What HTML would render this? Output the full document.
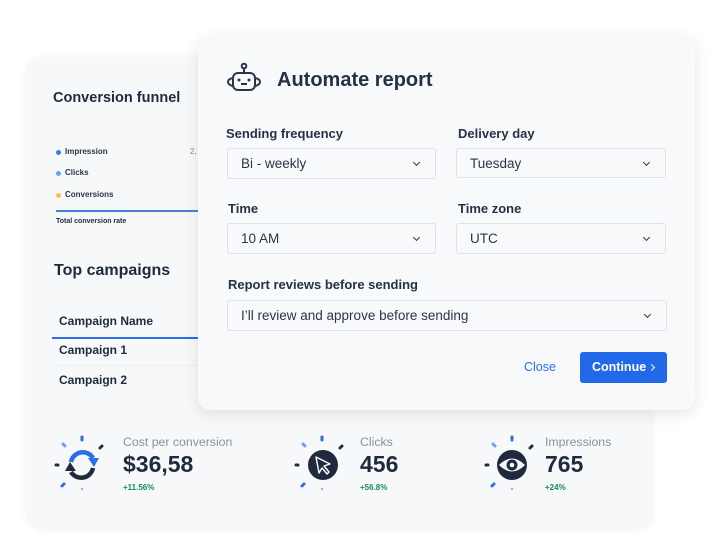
<!DOCTYPE html>
<html><head><meta charset="utf-8"><style>
*{margin:0;padding:0;box-sizing:border-box}
body{width:728px;height:560px;background:#fff;font-family:"Liberation Sans",sans-serif;color:#1f2a3c;position:relative;overflow:hidden}
.a{position:absolute;white-space:nowrap}
.card{position:absolute;left:25px;top:57px;width:629px;height:474px;background:#f7f8fa;border-radius:18px;box-shadow:0 0 8px rgba(0,0,0,.04)}
.modal{position:absolute;left:198px;top:36px;width:497px;height:374px;background:#f8f9fb;border-radius:12px;box-shadow:0 4px 16px rgba(0,0,0,.10)}
.lbl{font-size:13px;font-weight:bold;color:#253246}
.box{position:absolute;background:#f8f9fb;border:1px solid #dfe2e7;border-radius:3px;font-size:13.5px;color:#2b3547;padding-left:13px;line-height:29px}
.chev{position:absolute;right:16px;top:11px;width:5px;height:5px;border-right:1.3px solid #333;border-bottom:1.3px solid #333;transform:rotate(45deg)}
.dot{position:absolute;width:5px;height:5px;border-radius:50%}
.lg{font-size:8px;font-weight:bold;color:#2b3547}
.st{font-size:12.3px;color:#8a929e}
.val{font-size:23px;font-weight:bold;color:#1f2a3c}
.pc{font-size:8px;color:#178a5a;font-weight:bold}
</style></head><body>
<div class="card"></div>
<div class="a" style="left:53px;top:90px;font-size:14.5px;font-weight:bold">Conversion funnel</div>
<div class="dot" style="left:56px;top:150px;background:#3d7be6"></div><div class="a lg" style="left:65px;top:147px">Impression</div>
<div class="a lg" style="left:190px;top:147px;color:#888;font-weight:normal">2,</div>
<div class="dot" style="left:56px;top:171px;background:#6aa3ef"></div><div class="a lg" style="left:65px;top:168px">Clicks</div>
<div class="dot" style="left:56px;top:193px;background:#f6c244"></div><div class="a lg" style="left:65px;top:190px">Conversions</div>
<div class="a" style="left:56px;top:210px;width:142px;height:2px;background:#4a7fd8"></div>
<div class="a" style="left:56px;top:218px;font-size:7px;font-weight:bold">Total conversion rate</div>
<div class="a" style="left:54px;top:262px;font-size:16px;font-weight:bold">Top campaigns</div>
<div class="a" style="left:59px;top:314px;font-size:12px;font-weight:bold">Campaign Name</div>
<div class="a" style="left:52px;top:337px;width:146px;height:2px;background:#2b6ee8"></div>
<div class="a" style="left:59px;top:343px;font-size:12px;font-weight:bold">Campaign 1</div>
<div class="a" style="left:52px;top:365px;width:146px;height:1px;background:#eceef1"></div>
<div class="a" style="left:59px;top:373px;font-size:12px;font-weight:bold">Campaign 2</div>

<svg class="a" style="left:52px;top:434px" width="60" height="60" viewBox="0 0 60 60">
<g stroke-linecap="round" stroke-width="3"><line x1="30" y1="3" x2="30" y2="6" stroke="#2b6ee8"/><line x1="11" y1="10" x2="13" y2="12" stroke="#6aa3ef"/><line x1="50" y1="12" x2="48" y2="14" stroke="#1f2a3c"/><line x1="4" y1="31" x2="6" y2="31" stroke="#1f2a3c"/><line x1="12" y1="50" x2="10" y2="52" stroke="#2b6ee8"/></g>
<circle cx="30" cy="55" r="1.2" fill="#aab"/>
<path d="M19 28 A12 12 0 0 1 41 24" stroke="#2b6ee8" stroke-width="4.5" fill="none"/><path d="M36 24 L47 24 L42 33Z" fill="#2b6ee8"/>
<path d="M41 34 A12 12 0 0 1 19 38" stroke="#1f2a3c" stroke-width="4.5" fill="none"/><path d="M13 37 L24 37 L18 28Z" fill="#1f2a3c"/>
</svg>
<div class="a st" style="left:123px;top:435px">Cost per conversion</div>
<div class="a val" style="left:123px;top:451px">$36,58</div>
<div class="a pc" style="left:123px;top:483px">+11.56%</div>

<svg class="a" style="left:292px;top:434px" width="60" height="60" viewBox="0 0 60 60">
<g stroke-linecap="round" stroke-width="3"><line x1="30" y1="3" x2="30" y2="6" stroke="#2b6ee8"/><line x1="11" y1="10" x2="13" y2="12" stroke="#6aa3ef"/><line x1="50" y1="12" x2="48" y2="14" stroke="#1f2a3c"/><line x1="4" y1="31" x2="6" y2="31" stroke="#1f2a3c"/><line x1="12" y1="50" x2="10" y2="52" stroke="#2b6ee8"/></g>
<circle cx="30" cy="55" r="1.2" fill="#aab"/>
<circle cx="31" cy="31" r="15" fill="#1f2a3c"/>
<path d="M24 23 L38 30 L32 32 L37 38 L35 40 L30 34 L27 39Z" fill="none" stroke="#fff" stroke-width="1.4" stroke-linejoin="round"/>
</svg>
<div class="a st" style="left:360px;top:435px">Clicks</div>
<div class="a val" style="left:360px;top:451px">456</div>
<div class="a pc" style="left:360px;top:483px">+56.8%</div>

<svg class="a" style="left:482px;top:434px" width="60" height="60" viewBox="0 0 60 60">
<g stroke-linecap="round" stroke-width="3"><line x1="30" y1="3" x2="30" y2="6" stroke="#2b6ee8"/><line x1="11" y1="10" x2="13" y2="12" stroke="#6aa3ef"/><line x1="50" y1="12" x2="48" y2="14" stroke="#1f2a3c"/><line x1="4" y1="31" x2="6" y2="31" stroke="#1f2a3c"/><line x1="12" y1="50" x2="10" y2="52" stroke="#2b6ee8"/></g>
<circle cx="30" cy="55" r="1.2" fill="#aab"/>
<circle cx="30" cy="31" r="15" fill="#1f2a3c"/>
<path d="M17 31 Q30 18 43 31 Q30 44 17 31Z" fill="#f7f8fa"/>
<circle cx="30" cy="31" r="5.5" fill="#1f2a3c"/><circle cx="30" cy="31" r="2.3" fill="#f7f8fa"/>
</svg>
<div class="a st" style="left:545px;top:435px">Impressions</div>
<div class="a val" style="left:545px;top:451px">765</div>
<div class="a pc" style="left:545px;top:483px">+24%</div>

<div class="modal"></div>
<svg class="a" style="left:226px;top:62px" width="36" height="32" viewBox="0 0 36 32">
<g fill="none" stroke="#2b3547" stroke-width="2">
<circle cx="18" cy="4" r="2.3"/><line x1="18" y1="6.5" x2="18" y2="11"/>
<rect x="7" y="11" width="22" height="17" rx="5"/>
<path d="M7 16 Q2 17 2 20 Q2 23 7 24"/><path d="M29 16 Q34 17 34 20 Q34 23 29 24"/>
<line x1="15" y1="22" x2="21" y2="22"/></g>
<circle cx="13" cy="18" r="1.5" fill="#2b3547"/><circle cx="23" cy="18" r="1.5" fill="#2b3547"/>
</svg>
<div class="a" style="left:277px;top:69px;font-size:20px;font-weight:bold;color:#253246">Automate report</div>

<div class="a lbl" style="left:226px;top:126px">Sending frequency</div>
<div class="box" style="left:227px;top:148px;width:209px;height:31px">Bi - weekly<div class="chev"></div></div>
<div class="a lbl" style="left:458px;top:126px">Delivery day</div>
<div class="box" style="left:456px;top:148px;width:210px;height:30px">Tuesday<div class="chev"></div></div>

<div class="a lbl" style="left:228px;top:201px">Time</div>
<div class="box" style="left:227px;top:223px;width:209px;height:31px">10 AM<div class="chev"></div></div>
<div class="a lbl" style="left:458px;top:201px">Time zone</div>
<div class="box" style="left:456px;top:223px;width:210px;height:31px">UTC<div class="chev"></div></div>

<div class="a lbl" style="left:228px;top:277px">Report reviews before sending</div>
<div class="box" style="left:227px;top:300px;width:440px;height:31px">I’ll review and approve before sending<div class="chev"></div></div>

<div class="a" style="left:524px;top:360px;font-size:12.5px;color:#2b6ee8">Close</div>
<div class="a" style="left:580px;top:352px;width:87px;height:31px;background:#2269ea;border-radius:3px;color:#fff;font-size:12.5px;font-weight:bold;line-height:31px;padding-left:12px">Continue<span style="position:absolute;left:69px;top:13px;width:5px;height:5px;border-right:1.5px solid #fff;border-top:1.5px solid #fff;transform:rotate(45deg)"></span></div>
</body></html>
